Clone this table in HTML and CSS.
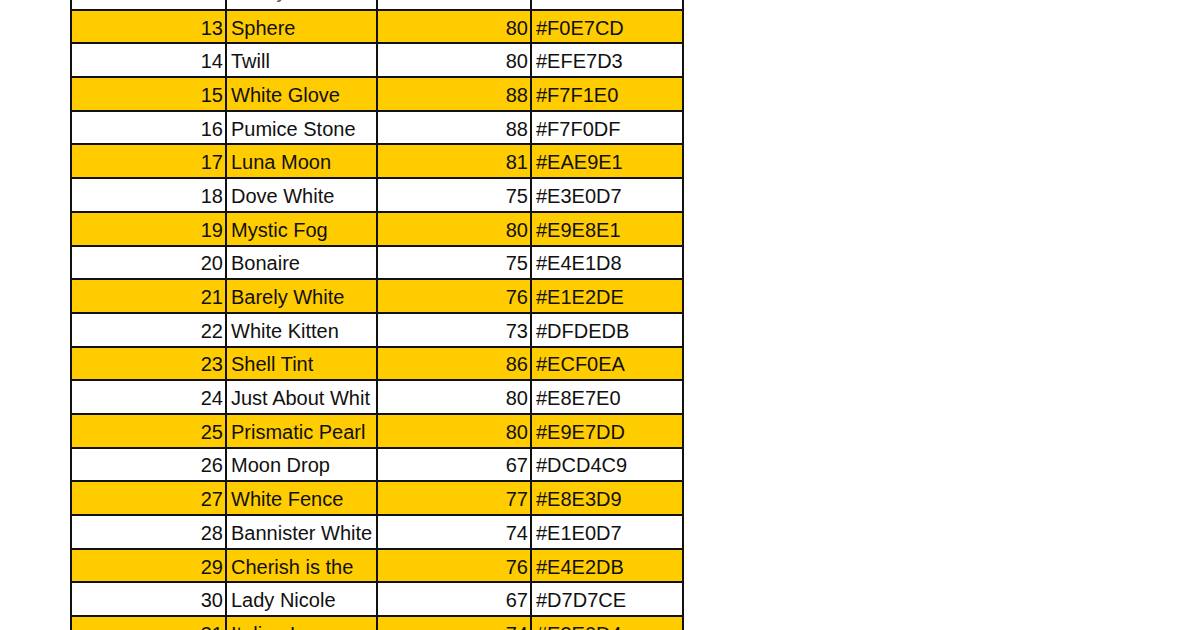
FILE: index.html
```html
<!DOCTYPE html>
<html>
<head>
<meta charset="utf-8">
<link rel="stylesheet" href="styles.css">
</head>
<body>
<div class="sheet">
<table class="grid">
<colgroup><col class="c1"><col class="c2"><col class="c3"><col class="c4"></colgroup>
<tbody>
<tr class="w first"><td class="n">12</td><td>Frosty White</td><td class="n">82</td><td>#F0EDE4</td></tr>
<tr class="y"><td class="n">13</td><td>Sphere</td><td class="n">80</td><td>#F0E7CD</td></tr>
<tr class="w"><td class="n">14</td><td>Twill</td><td class="n">80</td><td>#EFE7D3</td></tr>
<tr class="y"><td class="n">15</td><td>White Glove</td><td class="n">88</td><td>#F7F1E0</td></tr>
<tr class="w"><td class="n">16</td><td>Pumice Stone</td><td class="n">88</td><td>#F7F0DF</td></tr>
<tr class="y"><td class="n">17</td><td>Luna Moon</td><td class="n">81</td><td>#EAE9E1</td></tr>
<tr class="w"><td class="n">18</td><td>Dove White</td><td class="n">75</td><td>#E3E0D7</td></tr>
<tr class="y"><td class="n">19</td><td>Mystic Fog</td><td class="n">80</td><td>#E9E8E1</td></tr>
<tr class="w"><td class="n">20</td><td>Bonaire</td><td class="n">75</td><td>#E4E1D8</td></tr>
<tr class="y"><td class="n">21</td><td>Barely White</td><td class="n">76</td><td>#E1E2DE</td></tr>
<tr class="w"><td class="n">22</td><td>White Kitten</td><td class="n">73</td><td>#DFDEDB</td></tr>
<tr class="y"><td class="n">23</td><td>Shell Tint</td><td class="n">86</td><td>#ECF0EA</td></tr>
<tr class="w"><td class="n">24</td><td>Just About Whit</td><td class="n">80</td><td>#E8E7E0</td></tr>
<tr class="y"><td class="n">25</td><td>Prismatic Pearl</td><td class="n">80</td><td>#E9E7DD</td></tr>
<tr class="w"><td class="n">26</td><td>Moon Drop</td><td class="n">67</td><td>#DCD4C9</td></tr>
<tr class="y"><td class="n">27</td><td>White Fence</td><td class="n">77</td><td>#E8E3D9</td></tr>
<tr class="w"><td class="n">28</td><td>Bannister White</td><td class="n">74</td><td>#E1E0D7</td></tr>
<tr class="y"><td class="n">29</td><td>Cherish is the</td><td class="n">76</td><td>#E4E2DB</td></tr>
<tr class="w"><td class="n">30</td><td>Lady Nicole</td><td class="n">67</td><td>#D7D7CE</td></tr>
<tr class="y"><td class="n">31</td><td>Italian Lace</td><td class="n">74</td><td>#E3E0D4</td></tr>
</tbody>
</table>
</div>
</body>
</html>
```

FILE: styles.css
```css
html, body {
  margin: 0;
  padding: 0;
  background: #ffffff;
}
.sheet {
  width: 1200px;
  height: 630px;
  overflow: hidden;
  padding-left: 70px;
  box-sizing: border-box;
}
.grid {
  margin-top: -25px;
  border-collapse: collapse;
  table-layout: fixed;
  width: 614px;
  font-family: "Liberation Sans", Arial, sans-serif;
  font-size: 20px;
  color: #111;
}
.c1 { width: 155px; }
.c2 { width: 151px; }
.c3 { width: 154px; }
.c4 { width: 152px; }
.grid tr { height: 33.7px; }
.grid td {
  border: 2px solid #111;
  padding: 2px 2px 0 4px;
  white-space: nowrap;
  overflow: hidden;
  vertical-align: middle;
  line-height: 22px;
}
.grid tr.first td {
  padding-top: 0;
  padding-bottom: 4px;
  color: #555;
}
.grid td.n { text-align: right; }
.y td { background: #ffcc00; }
.w td { background: #ffffff; }
```
